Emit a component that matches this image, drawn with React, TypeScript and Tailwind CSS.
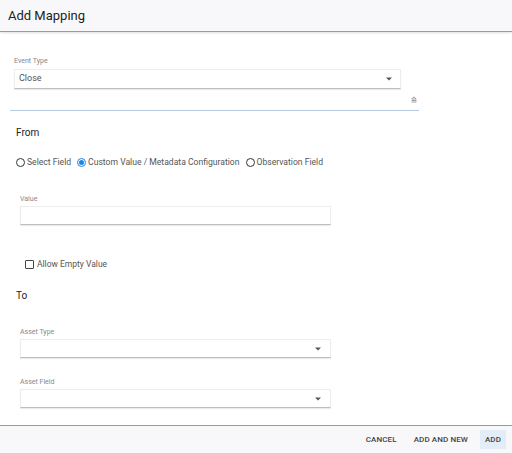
import React from 'react';

const Arrow: React.FC = () => (
  <svg width="6" height="4" viewBox="0 0 6 4" className="text-[#555]">
    <path d="M0 0.5h6L3 3.5z" fill="currentColor" />
  </svg>
);

const Field: React.FC<{ label: string; select?: boolean; className?: string }> = ({ label, select, className }) => (
  <div className={className}>
    <div className="text-[7px] leading-[9px] text-[#888]">{label}</div>
    <div className="mt-[2px] w-[311px] h-[19px] bg-white border border-[#ededed] border-b-[#bdbdbd] shadow-[0_1px_1px_rgba(0,0,0,0.08)] flex items-center justify-end pr-[9px]">
      {select && <Arrow />}
    </div>
  </div>
);

const Radio: React.FC<{ label: string; checked?: boolean }> = ({ label, checked }) => (
  <label className="flex items-center gap-[2px] mr-[6px]">
    <span
      className={`w-[9px] h-[9px] rounded-full border flex items-center justify-center ${
        checked ? 'border-[#1e88e5]' : 'border-[#333]'
      }`}
    >
      {checked && <span className="w-[5px] h-[5px] rounded-full bg-[#1e88e5]" />}
    </span>
    <span className="text-[8.6px] leading-[12px] text-[#555]">{label}</span>
  </label>
);

export default function App() {
  return (
    <div
      className="w-[512px] h-[453px] flex flex-col bg-white overflow-hidden"
      style={{ fontFamily: 'Roboto, "Liberation Sans", sans-serif' }}
    >
      {/* Header */}
      <div className="h-[32px] shrink-0 bg-[#f8f8fa] border-b border-[#9a9a9a] shadow-[0_1px_2px_rgba(0,0,0,0.12)] flex items-center px-[8px] z-10">
        <h1 className="text-[13px] text-[#222] leading-none -mt-[1px]">Add Mapping</h1>
      </div>

      {/* Body */}
      <div className="flex-1 overflow-hidden">
        <div className="pt-[25px] px-[14px]">
          <div className="text-[7px] leading-[9px] text-[#888]">Event Type</div>
          <div className="mt-[3px] w-[387px] h-[20px] bg-white border border-[#ededed] border-b-[#bdbdbd] shadow-[0_1px_1px_rgba(0,0,0,0.08)] flex items-center justify-between pl-[4px] pr-[8px]">
            <span className="text-[9px] text-[#555]">Close</span>
            <Arrow />
          </div>
        </div>
        <div className="ml-[10px] w-[409px] h-[22px] border-b border-[#b7cbe0] flex items-center justify-end pr-[2px]">
          <svg width="6" height="7" viewBox="0 0 6 7" className="text-[#888]">
            <path d="M3 0.8L5.2 3H0.8z" fill="none" stroke="currentColor" strokeWidth="0.8" />
            <path d="M0.5 4.5h5M0.5 6h5" stroke="currentColor" strokeWidth="0.8" />
          </svg>
        </div>

        <div className="px-[16px]">
          <div className="mt-[16px] text-[10px] leading-[12px] text-[#222]">From</div>
          <div className="mt-[17px] flex items-center">
            <Radio label="Select Field" />
            <Radio label="Custom Value / Metadata Configuration" checked />
            <Radio label="Observation Field" />
          </div>
        </div>

        <Field label="Value" className="mt-[27px] ml-[20px]" />

        <div className="mt-[34px] ml-[25px] flex items-center gap-[3px]">
          <span className="w-[9px] h-[9px] border border-[#444] rounded-[1px]" />
          <span className="text-[8.5px] leading-[11px] text-[#555]">Allow Empty Value</span>
        </div>

        <div className="mt-[20px] px-[16px] text-[10px] leading-[12px] text-[#222]">To</div>

        <Field label="Asset Type" select className="mt-[26px] ml-[20px]" />
        <Field label="Asset Field" select className="mt-[20px] ml-[20px]" />
      </div>

      {/* Footer */}
      <div className="h-[28px] shrink-0 bg-[#f8f8fa] border-t border-[#9a9a9a] flex items-center justify-end pr-[6px]">
        <button className="h-[19px] px-[4px] text-[8px] font-medium tracking-[0.1px] text-[#444] uppercase">Cancel</button>
        <button className="ml-[9px] h-[19px] px-[4px] text-[8px] font-medium tracking-[0.1px] text-[#444] uppercase">Add and New</button>
        <button className="ml-[8px] h-[19px] px-[5px] bg-[#e2edf7] text-[8px] font-medium tracking-[0.1px] text-[#444] uppercase">Add</button>
      </div>
    </div>
  );
}
